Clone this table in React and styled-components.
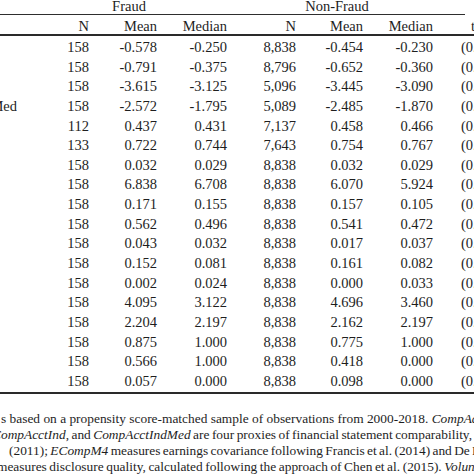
import React from 'react';
import styled, { createGlobalStyle } from 'styled-components';

const Global = createGlobalStyle`
  html, body { margin: 0; padding: 0; background: #fff; }
  body { width: 474px; height: 474px; overflow: hidden; }
`;

const COLS = '17px 72px 68px 70px 69px 67px 70px 1fr';

const Page = styled.div`
  width: 474px;
  height: 474px;
  overflow: hidden;
  font-family: "Liberation Serif", "Times New Roman", serif;
  color: #1e1e1e;
  background: #fff;
`;

const Table = styled.div`
  display: flex;
  flex-direction: column;
  font-size: 14.5px;
`;

const GroupRow = styled.div`
  display: grid;
  grid-template-columns: ${COLS};
  width: 465px;
  line-height: 12px;
  padding-bottom: 2px;
  border-bottom: 1px solid #2e2e2e;
`;

const GroupCell = styled.div`
  grid-column: ${(p) => p.$span};
  text-align: center;
  padding-left: 14px;
  white-space: nowrap;
`;

const HeadRow = styled.div`
  display: grid;
  grid-template-columns: ${COLS};
  line-height: 16px;
  padding-top: 3px;
  border-bottom: 2px solid #2a2a2a;
`;

const Cell = styled.div`
  text-align: right;
  white-space: nowrap;
`;

const SideCell = styled.div`
  text-align: left;
  white-space: nowrap;
  overflow: hidden;
  padding-left: ${(p) => p.$pad}px;
`;

const Label = styled.div`
  display: flex;
  justify-content: flex-end;
  overflow: hidden;
  white-space: nowrap;
`;

const Body = styled.div`
  display: flex;
  flex-direction: column;
  padding-top: 2px;
  border-bottom: 2px solid #2a2a2a;
`;

const DataRow = styled.div`
  display: grid;
  grid-template-columns: ${COLS};
  height: 19.65px;
  line-height: 19.65px;
`;

const Note = styled.div`
  margin-top: 17px;
  font-size: 13.4px;
  line-height: 16px;
  display: flex;
  flex-direction: column;
`;

const NoteLine = styled.div`
  white-space: nowrap;
  overflow: hidden;
  text-indent: ${(p) => p.$indent}px;
  word-spacing: ${(p) => p.$ws || 0}px;
`;

const Var = styled.i`
  font-style: italic;
`;

const rows = [
  ['', '158', '-0.578', '-0.250', '8,838', '-0.454', '-0.230'],
  ['', '158', '-0.791', '-0.375', '8,796', '-0.652', '-0.360'],
  ['', '158', '-3.615', '-3.125', '5,096', '-3.445', '-3.090'],
  ['CompAcctIndMed', '158', '-2.572', '-1.795', '5,089', '-2.485', '-1.870'],
  ['', '112', '0.437', '0.431', '7,137', '0.458', '0.466'],
  ['', '133', '0.722', '0.744', '7,643', '0.754', '0.767'],
  ['', '158', '0.032', '0.029', '8,838', '0.032', '0.029'],
  ['', '158', '6.838', '6.708', '8,838', '6.070', '5.924'],
  ['', '158', '0.171', '0.155', '8,838', '0.157', '0.105'],
  ['', '158', '0.562', '0.496', '8,838', '0.541', '0.472'],
  ['', '158', '0.043', '0.032', '8,838', '0.017', '0.037'],
  ['', '158', '0.152', '0.081', '8,838', '0.161', '0.082'],
  ['', '158', '0.002', '0.024', '8,838', '0.000', '0.033'],
  ['', '158', '4.095', '3.122', '8,838', '4.696', '3.460'],
  ['', '158', '2.204', '2.197', '8,838', '2.162', '2.197'],
  ['', '158', '0.875', '1.000', '8,838', '0.775', '1.000'],
  ['', '158', '0.566', '1.000', '8,838', '0.418', '0.000'],
  ['', '158', '0.057', '0.000', '8,838', '0.098', '0.000'],
];

export default function App() {
  return (
    <Page>
      <Global />
      <Table>
        <GroupRow>
          <GroupCell $span="2 / 5">Fraud</GroupCell>
          <GroupCell $span="5 / 8">Non-Fraud</GroupCell>
        </GroupRow>
        <HeadRow>
          <Label />
          <Cell>N</Cell>
          <Cell>Mean</Cell>
          <Cell>Median</Cell>
          <Cell>N</Cell>
          <Cell>Mean</Cell>
          <Cell>Median</Cell>
          <SideCell $pad={38}>t-stat</SideCell>
        </HeadRow>
        <Body>
          {rows.map((r, i) => (
            <DataRow key={i}>
              <Label>{r[0]}</Label>
              {r.slice(1).map((v, j) => (
                <Cell key={j}>{v}</Cell>
              ))}
              <SideCell $pad={28}>(0.000)</SideCell>
            </DataRow>
          ))}
        </Body>
      </Table>
      <Note>
        <NoteLine $indent={1}>
          s based on a propensity score-matched sample of observations from 2000-2018. <Var>CompAcct4</Var>,
        </NoteLine>
        <NoteLine $indent={-8} $ws={-0.9}>
          <Var>CompAcctInd</Var>, and <Var>CompAcctIndMed</Var> are four proxies of financial statement comparability, following
        </NoteLine>
        <NoteLine $indent={9} $ws={-1}>
          (2011); <Var>ECompM4</Var> measures earnings covariance following Francis et al. (2014) and De Franco et al.
        </NoteLine>
        <NoteLine $indent={-3} $ws={-0.8}>
          measures disclosure quality, calculated following the approach of Chen et al. (2015). <Var>Voluntary</Var>
        </NoteLine>
      </Note>
    </Page>
  );
}
